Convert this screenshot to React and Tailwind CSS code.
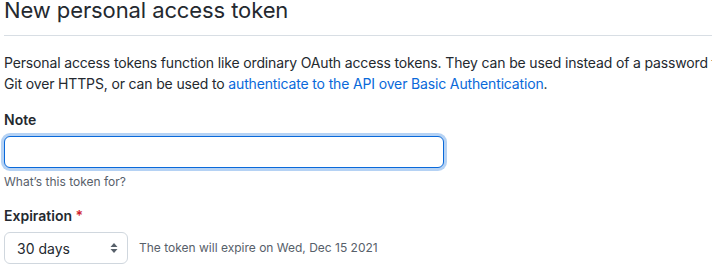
export default function App() {
  return (
    <div
      className="w-[712px] h-[274px] overflow-hidden bg-white text-[#24292f]"
      style={{ fontFamily: 'Inter, "Liberation Sans", sans-serif' }}
    >
      <div className="w-[760px] pl-[4px]">
        <div className="border-b border-[#d8dee4] pb-[11px] -mt-[4px]">
          <h2 className="text-[22px] leading-[28px] font-normal tracking-[-0.1px]">
            New personal access token
          </h2>
        </div>

        <p className="mt-[16px] text-[14px] leading-[21px] tracking-[-0.15px]">
          Personal access tokens function like ordinary OAuth access tokens. They can be used instead of a password for
          <br />
          Git over HTTPS, or can be used to{' '}
          <a href="#" className="text-[#0969da]">authenticate to the API over Basic Authentication</a>.
        </p>

        <div className="mt-[15px]">
          <label className="block text-[14px] leading-[21px] font-semibold">Note</label>
          <div className="mt-[6px] w-[440px] h-[32px] rounded-[6px] border border-[#0969da] bg-white shadow-[0_0_0_3px_rgba(9,105,218,0.3)]" />
          <p className="mt-[5px] text-[12px] leading-[18px] text-[#57606a]">What’s this token for?</p>
        </div>

        <div className="mt-[14px]">
          <label className="block text-[14px] leading-[21px] font-semibold">
            Expiration <span className="text-[#cf222e]">*</span>
          </label>
          <div className="mt-[6px] flex items-center">
            <div className="w-[124px] h-[32px] rounded-[6px] border border-[#d0d7de] bg-white flex items-center justify-between pl-[12px] pr-[9px]">
              <span className="text-[14px]">30 days</span>
              <svg width="8" height="12" viewBox="0 0 8 12" fill="#57606a">
                <path d="M4 1 L7.5 5 H0.5 Z" />
                <path d="M4 11 L7.5 7 H0.5 Z" />
              </svg>
            </div>
            <span className="ml-[11px] text-[12px] text-[#57606a]">
              The token will expire on Wed, Dec 15 2021
            </span>
          </div>
        </div>
      </div>
    </div>
  );
}
